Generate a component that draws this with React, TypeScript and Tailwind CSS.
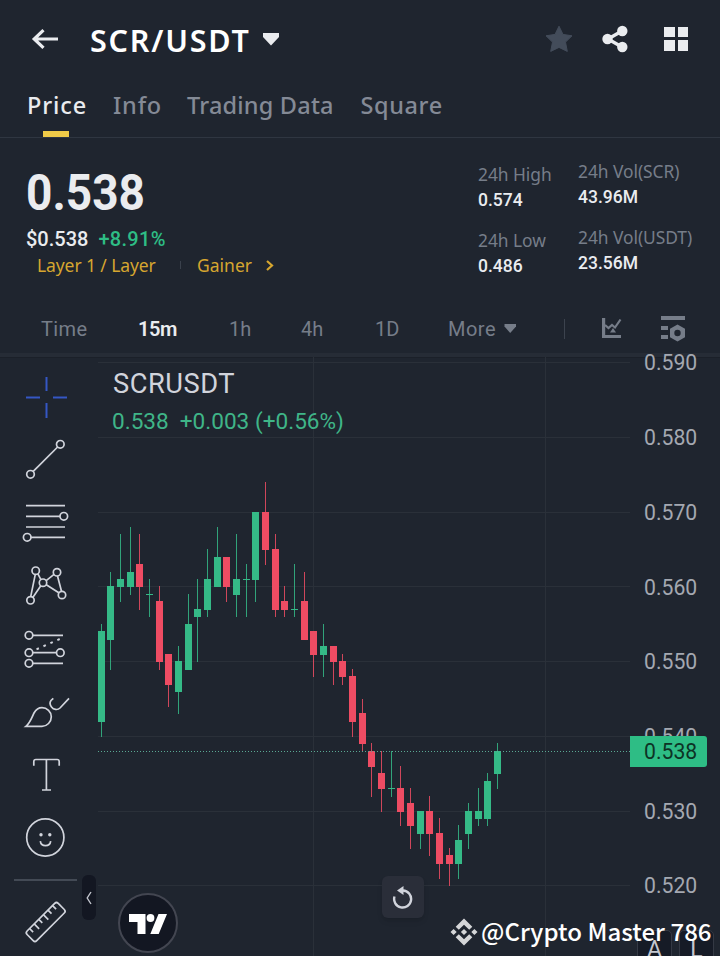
import type { ReactNode } from "react";
import { clsx } from "clsx";

const tabs = [
  { label: "Price", style: "w-[59px] tracking-[0.9px]" },
  { label: "Info", style: "ml-[0.5px] w-[47.5px] tracking-[0.8px]" },
  { label: "Trading Data", style: "w-[147px] tracking-[0.2px]" },
  { label: "Square", style: "w-[83px] tracking-[0.6px]" },
];

const intervals = [
  { label: "Time", style: "w-[97px] tracking-[0.4px]" },
  { label: "15m", style: "w-[91px]" },
  { label: "1h", style: "w-[72px]" },
  { label: "4h", style: "w-[74px]" },
  { label: "1D", style: "w-[73px]" },
];

const priceLabels = ["0.590", "0.580", "0.570", "0.560", "0.550", "0.540", "0.530", "0.520"];

// [open, high, low, close] in thousandths
const candles = [
  [542, 555, 540, 554], [553, 562, 549, 560], [560, 567, 558, 561], [560, 568, 559, 562],
  [563, 567, 557, 560], [559, 561, 556, 559], [558, 560, 549, 550], [551, 551, 544, 547],
  [546, 552, 543, 550], [549, 559, 549, 555], [556, 561, 550, 557], [557, 565, 556, 561],
  [560, 568, 560, 564], [564, 564, 558, 560], [559, 567, 556, 561], [561, 563, 556, 561],
  [561, 570, 558, 570], [570, 574, 563, 565], [565, 567, 556, 557], [558, 560, 556, 557],
  [557, 563, 556, 557], [558, 562, 553, 553], [554, 554, 548, 551], [551, 555, 548, 552],
  [552, 552, 547, 550], [550, 551, 547, 548], [548, 549, 540, 542], [543, 545, 538, 539],
  [538, 539, 532, 536], [535, 538, 530, 533], [533, 538, 532, 533], [533, 536, 528, 530],
  [531, 533, 525, 528], [527, 530, 525, 530], [530, 532, 524, 527], [527, 529, 521, 523],
  [524, 525, 520, 523], [523, 528, 521, 526], [527, 531, 525, 530], [529, 533, 528, 530],
  [529, 535, 528, 534], [535, 539, 533, 538],
];

const UP = "#35ba87";
const DOWN = "#ee4c63";

const toY = (price: number) => Math.round(528.2 - (price - 520) * 7.468);

const Chart = () => (
  <svg width="538" height="599" viewBox="92 0 538 599" shapeRendering="crispEdges">
    {[590, 580, 570, 560, 550, 540, 530, 520].map((p) => (
      <rect key={p} x="98" y={toY(p)} width="532" height="1" fill="#2a3039" />
    ))}
    <rect x="313" y="0" width="1" height="599" fill="#2a3039" />
    <rect x="545" y="0" width="1" height="599" fill="#2a3039" />
    {candles.map(([open, high, low, close], i) => {
      const x = 101 + Math.floor(i * 9.66 + 0.3);
      const color = close >= open ? UP : DOWN;
      const top = toY(Math.max(open, close));
      const bottom = toY(Math.min(open, close)) + 1;
      return (
        <g key={i} fill={color}>
          <rect x={x} y={toY(high)} width="1" height={toY(low) - toY(high) + 1} opacity="0.85" />
          <rect x={x - 3} y={top} width="7" height={bottom - top} />
        </g>
      );
    })}
    <line x1="98" x2="630" y1="394.5" y2="394.5" stroke="#5aa893" strokeDasharray="1 2" />
  </svg>
);

const Tool = ({ children, color = "#d1d4dc" }: { children: ReactNode; color?: string }) => (
  <svg width="52" height="52" viewBox="0 0 52 52" fill="none" stroke={color} strokeWidth="1.7" className="shrink-0">
    {children}
  </svg>
);

const Toolbar = () => (
  <div className="relative flex w-[92px] shrink-0 flex-col gap-[11px] pl-5 pt-[14px]">
    <Tool color="#3557c4">
      <path d="M6 26.5h14M33 26.5h14M26.5 6v14M26.5 32v15" strokeWidth="2" />
    </Tool>
    <Tool>
      <path d="M13 37.6 37.6 13" />
      <circle cx="40.3" cy="10.3" r="3.8" />
      <circle cx="10.5" cy="40.3" r="3.8" />
    </Tool>
    <Tool>
      <path d="M6 8.7h39M6 19.3h34M6 30h39M10.5 40.3H45" />
      <circle cx="43.8" cy="19.3" r="3.8" />
      <circle cx="7.2" cy="40.3" r="3.8" />
    </Tool>
    <Tool>
      <path d="M15.3 14.4 10.7 36.6M12.8 37.5l8-11.8M17.9 13.8l3 5.8M26.2 20.6l7.8-6.2M37.5 16l4 15.3M26.3 24.8l12.5 8" />
      <circle cx="15.7" cy="10.7" r="3.7" />
      <circle cx="37" cy="12.3" r="3.7" />
      <circle cx="23" cy="22.7" r="3.7" />
      <circle cx="42" cy="35" r="3.7" />
      <circle cx="10.5" cy="40.3" r="3.7" />
    </Tool>
    <Tool>
      <path d="M12.8 12.3H43M12.8 29.7h23.7M12.8 40.3H43" />
      <path d="M16.5 26.3 42 15" strokeWidth="2" strokeDasharray="2.6 5" />
      <circle cx="9" cy="12.3" r="3.8" />
      <circle cx="9" cy="29.7" r="3.8" />
      <circle cx="40.3" cy="29.7" r="3.8" />
      <circle cx="9" cy="40.3" r="3.8" />
    </Tool>
    <Tool>
      <path d="M5.9 40.3C10 37 12 31 14 27c2-3.5 4.5-5.3 8-5.3 5 0 9.3 4 9.3 9 0 5.3-4.3 9.6-9.3 9.6Z" />
      <path d="M33.3 12.3 31 14.5c-1.5 2-1 4.5.5 6.5 2 2.7 6 3.5 8.5 1l9-9.7" />
    </Tool>
    <Tool>
      <path d="M13.8 16.8v-4.2q0-2.1 2.1-2.1h21.2q2.1 0 2.1 2.1v4.2M26.4 10.5V41M22 41h9" />
    </Tool>
    <Tool>
      <circle cx="25.3" cy="25.5" r="18.6" />
      <circle cx="21" cy="22.7" r="1.7" fill="#d1d4dc" stroke="none" />
      <circle cx="29.8" cy="22.7" r="1.7" fill="#d1d4dc" stroke="none" />
      <path d="M20.3 29.2c.8 6 9.6 6 10.4 0" />
    </Tool>
    <div className="-ml-[6px] mt-[4px] h-[2px] w-[63px] shrink-0 bg-[#434a55]" />
    <div className="mt-[1px]">
      <Tool>
        <g transform="rotate(-45 25.7 29)">
          <rect x="3.7" y="22.2" width="44" height="13.6" rx="2.5" />
          <path d="M9.7 22.2v5M16.2 22.2v7M22.7 22.2v5M29.2 22.2v7M35.7 22.2v5M42.2 22.2v5" />
        </g>
      </Tool>
    </div>
    <div className="absolute left-[82px] top-[518px] z-10 flex h-[45px] w-[14px] items-center justify-center rounded-[6px] bg-[#131722]">
      <svg width="6" height="14" viewBox="0 0 6 14" fill="none" stroke="#c3c6ce" strokeWidth="1.4">
        <path d="M5 1 1.2 7 5 13" />
      </svg>
    </div>
  </div>
);

const Stat = ({ label, value }: { label: string; value: string }) => (
  <div className="h-[66px] whitespace-nowrap">
    <div className="pt-px text-[17.4px] leading-[26px] tracking-[-0.05px] text-[#767d89]">{label}</div>
    <div className="font-[Roboto] text-[17.5px] font-medium leading-[26px] text-[#eaecef]">{value}</div>
  </div>
);

const Watermark = () => (
  <div className="absolute left-[450px] top-[556px] z-20 flex items-center gap-[3px] whitespace-nowrap">
    <svg className="mt-px" width="28" height="28" viewBox="0 0 28 28" fill="#d5d6d8">
      <path d="m14 .5 8.3 8.2-3.1 3.1L14 6.7l-5.2 5.1-3.1-3.1zM3.6 10.9 6.7 14l-3.1 3.1L.5 14zM24.4 10.9l3.1 3.1-3.1 3.1-3.1-3.1zM14 10.9l3.1 3.1-3.1 3.1-3.1-3.1zM5.7 19.3l3.1-3.1 5.2 5.1 5.2-5.1 3.1 3.1-8.3 8.2z" />
    </svg>
    <span className="font-['Noto_Sans_CJK_SC',sans-serif] text-[24px] font-medium leading-9 tracking-[0.05px] text-white">
      @Crypto Master 786
    </span>
  </div>
);

export default function App() {
  return (
    <div className="flex h-[956px] w-[720px] flex-col overflow-hidden bg-[#1f252f] font-['Noto_Sans',sans-serif]">
      <header className="flex h-[77px] shrink-0 items-center pl-[31px] pr-[31px]">
        <svg width="28" height="22" viewBox="0 0 28 22" fill="none" stroke="#eaecef" strokeWidth="3.2">
          <path d="M27 11H4M12.5 2.2 3.2 11l9.3 8.8" />
        </svg>
        <h1 className="ml-[31px] mt-[3px] w-[160px] whitespace-nowrap text-[30.5px] font-semibold leading-10 tracking-[1.8px] text-white">
          SCR/USDT
        </h1>
        <svg className="ml-[13px] mt-[2px]" width="16" height="13" viewBox="0 0 16 13" fill="#eaecef">
          <path d="M0 0h16v4L8 12.5 0 4z" />
        </svg>
        <svg className="ml-auto" width="28" height="28" viewBox="0 0 28 28" fill="#434c5a" stroke="#434c5a" strokeWidth="1" strokeLinejoin="round">
          <path d="m14 1.2 4 8.2 9 1.4-6.5 6.3 1.8 9.3-8.3-4-8.3 4 1.8-9.3L1 10.8l9-1.4z" />
        </svg>
        <svg className="ml-[28px]" width="28" height="28" viewBox="0 0 28 28" fill="#eaecef">
          <path d="M7 14 21 6M7 14l14 8" stroke="#eaecef" strokeWidth="3.4" />
          <circle cx="6.5" cy="14" r="5.2" />
          <circle cx="21.3" cy="6" r="5.2" />
          <circle cx="21.3" cy="22" r="5.2" />
        </svg>
        <div className="ml-[35px] mr-px grid grid-cols-2 gap-[3px]">
          {[0, 1, 2, 3].map((n) => (
            <div key={n} className="size-[10.5px] bg-[#eaecef]" />
          ))}
        </div>
      </header>

      <nav className="flex h-[61px] shrink-0 gap-[26.5px] border-b border-[#2f3641] pl-[27px]">
        {tabs.map((tab, i) => (
          <div key={tab.label} className={clsx("flex flex-col items-center", tab.style)}>
            <span
              className={clsx(
                "mt-[12px] self-start whitespace-nowrap text-[23.5px] font-medium leading-8",
                i === 0 ? "text-[#eaecef]" : "text-[#848a96]"
              )}
            >
              {tab.label}
            </span>
            {i === 0 && <span className="mr-px mt-auto h-[6px] w-[26px] shrink-0 bg-[#f0cb48]" />}
          </div>
        ))}
      </nav>

      <section className="flex h-[164px] shrink-0">
        <div className="w-[478px] pl-[26px] pt-[28px]">
          <div className="origin-left scale-x-[0.92] font-[Roboto] text-[50px] font-bold leading-[54px] text-[#eaecef]">0.538</div>
          <div className="mt-[6px] flex gap-[10px] font-[Roboto] text-[20px] font-medium leading-[26px]">
            <span className="text-[#eaecef]">$0.538</span>
            <span className="tracking-[0.3px] text-[#2ebd85]">+8.91%</span>
          </div>
          <div className="ml-[11px] flex items-center whitespace-nowrap text-[17.5px] leading-[26px] text-[#d6a62f]">
            <span className="w-[143px] tracking-[-0.1px]">Layer 1 / Layer</span>
            <span className="h-[8px] w-px bg-[#3a414c]" />
            <span className="ml-[16px] w-[69px]">Gainer</span>
            <svg width="8" height="11" viewBox="0 0 8 11" fill="none" stroke="#d6a62f" strokeWidth="2.2">
              <path d="m1 1 5 4.5L1 10" />
            </svg>
          </div>
        </div>
        <div className="w-[100px] pt-[22px]">
          <Stat label="24h High" value="0.574" />
          <Stat label="24h Low" value="0.486" />
        </div>
        <div className="pt-[19px]">
          <Stat label="24h Vol(SCR)" value="43.96M" />
          <Stat label="24h Vol(USDT)" value="23.56M" />
        </div>
      </section>

      <div className="flex h-[51px] shrink-0 items-center pl-[41px] pt-[3px] font-[Roboto] text-[20px] text-[#767d89]">
        {intervals.map(({ label, style }) => (
          <span key={label} className={clsx(style, label === "15m" && "font-semibold tracking-[-0.4px] text-[#eaecef]")}>
            {label}
          </span>
        ))}
        <span className="w-[56px] tracking-[0.5px]">More</span>
        <svg width="13" height="10" viewBox="0 0 13 10" fill="#767d89">
          <path d="M.5 0h11.5v2.5L6.2 9 .5 2.5z" />
        </svg>
        <span className="ml-[47px] h-[20px] w-px bg-[#3c434e]" />
        <svg className="-mt-[2px] ml-[37px]" width="20" height="21" viewBox="0 0 20 21" fill="none" stroke="#767d89">
          <path d="M1.6 0v18.5H19" strokeWidth="3.2" />
          <path d="m3 7 3.5 3L10 7l3 2.5 5.5-8" strokeWidth="2.2" />
          <path d="M8 14.5h6L11 10z" fill="#767d89" strokeWidth="0" />
        </svg>
        <svg className="ml-[38px]" width="26" height="26" viewBox="0 0 26 26" fill="#767d89">
          <path d="M1 0h24v4H1zM1 10h7v4H1zM1 19h7v4H1z" />
          <path fillRule="evenodd" d="m17.5 8.5 7.5 4.3v8.4l-7.5 4.3-7.5-4.3v-8.4zm0 5.3a3.2 3.2 0 1 0 0 6.4 3.2 3.2 0 0 0 0-6.4z" />
        </svg>
      </div>
      <div className="h-[5px] shrink-0 border-b border-[#1b2029] bg-[#262c36]" />

      <main className="relative -mt-px flex flex-1 font-[Roboto]">
        <Toolbar />
        <Chart />
        <div className="-mt-[31px] flex w-[90px] flex-col pl-[14px] text-[21.2px] text-[#a4a8b1]">
          {priceLabels.map((label) => (
            <span key={label} className="flex h-[74.7px] shrink-0 items-center">
              {label}
            </span>
          ))}
        </div>

        <div className="absolute left-[112px] top-[9px]">
          <div className="pl-px text-[27.3px] leading-9 tracking-[0.5px] text-[#d1d4dc]">SCRUSDT</div>
          <div className="mt-[4px] flex gap-[11px] whitespace-nowrap text-[22.6px] leading-8 text-[#3fb588]">
            <span>0.538</span>
            <span>+0.003 (+0.56%)</span>
          </div>
        </div>
        <div className="absolute left-[630px] top-[379px] flex h-[31px] w-[77px] items-center rounded-r-[3px] bg-[#2ebd85] pl-[14px] text-[21.2px] text-[#0d3325]">
          0.538
        </div>
        <div className="absolute left-[382px] top-[519px] flex size-[42px] items-center justify-center rounded-[6px] bg-[#2a2e39] shadow-md">
          <svg width="22" height="24" viewBox="0 0 22 24" fill="none" stroke="#d1d4dc" strokeWidth="2.4">
            <path d="M2.5 11.5A8.500 8.500 0 1 0 11 5.500H9" />
            <path d="M11.5 1v9L5 5.500z" fill="#d1d4dc" stroke="none" />
          </svg>
        </div>
        <div className="absolute left-[118px] top-[536px] flex size-[60px] items-center justify-center rounded-full border-2 border-[#434651] bg-[#131722]">
          <svg className="mt-[2px]" width="38" height="20" viewBox="0 0 38 20" fill="#fff">
            <path d="M0 0h16.5v20h-8V8H0zM29.5 0H38l-8.3 20h-8.4z" />
            <circle cx="21.5" cy="4" r="3.9" />
          </svg>
        </div>
        <div className="absolute left-[637px] top-[573px] flex gap-[7px] text-[23px] leading-none text-[#c4c7cf]">
          <span className="flex h-[40px] w-[35px] justify-center rounded-[5px] border border-[#343944] bg-[#161b26] pt-[7px]">A</span>
          <span className="flex h-[40px] w-[35px] justify-center rounded-[5px] border border-[#343944] bg-[#161b26] pt-[7px]">L</span>
        </div>
        <Watermark />
      </main>
    </div>
  );
}
